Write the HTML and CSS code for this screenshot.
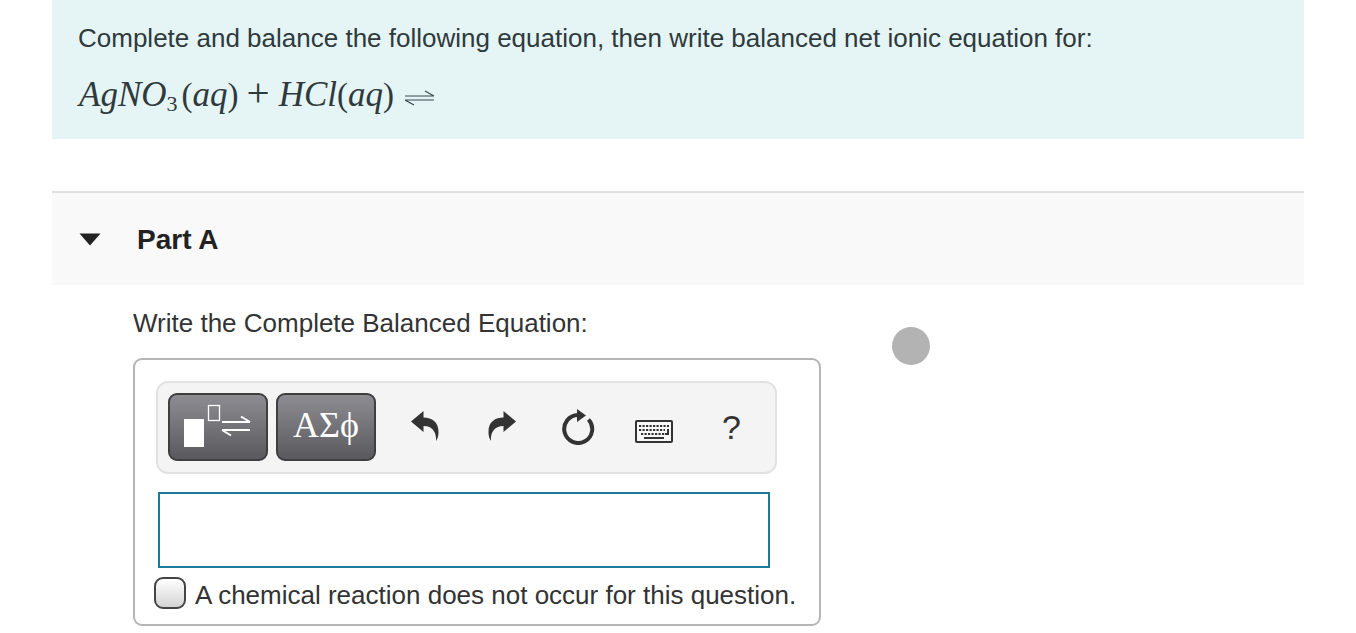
FILE: index.html
```html
<!DOCTYPE html>
<html lang="en">
<head>
<meta charset="utf-8">
<title>Part A</title>
<link rel="stylesheet" href="styles.css">
</head>
<body>
<main class="page">
  <section class="intro">
    <p class="intro-text">Complete and balance the following equation, then write balanced net ionic equation for:</p>
    <p class="equation"><i>AgNO</i><span class="sub">3</span><span class="paren">(</span><i>aq</i><span class="paren">)</span><span class="plus">+</span><i>HCl</i><span class="paren">(</span><i>aq</i><span class="paren">)</span><svg class="eq-arrows" viewBox="0 0 30 16" aria-hidden="true"><path d="M0 6H29M29 6L20 1M29 10H0M0 10L9 15" fill="none" stroke="#3b4a4c" stroke-width="1.2"/></svg></p>
  </section>

  <header class="part-header">
    <svg class="caret" viewBox="0 0 22 13" aria-hidden="true"><path d="M0.5 0.5H21.5L11 12.5Z" fill="#222"/></svg>
    <h2 class="part-title">Part A</h2>
  </header>

  <section class="part-body">
    <p class="prompt">Write the Complete Balanced Equation:</p>
    <div class="panel">
      <div class="toolbar">
        <button class="tool-btn" type="button" aria-label="Templates">
          <svg class="tmpl" viewBox="0 0 68 46" aria-hidden="true">
            <rect x="0" y="15" width="20" height="28" fill="#fff"/>
            <rect x="24.500" y="1.500" width="11" height="15" fill="none" stroke="#fff" stroke-width="1.300"/>
            <path d="M38 18H66M66 18L57 12.500M66 26H38M38 26L47 31.500" fill="none" stroke="#fff" stroke-width="2"/>
          </svg>
        </button>
        <button class="tool-btn symbols" type="button">ΑΣϕ</button>
        <div class="icons">
          <svg class="icon undo" viewBox="0 0 30 32" aria-hidden="true"><path d="M1 11.500L13.500 1V7.500C22 7.500 29 12 28.500 23C28.400 26 27.500 29 26 31C26.600 24 24 16 13.500 16V22Z" fill="#333"/></svg>
          <svg class="icon redo" viewBox="0 0 30 32" aria-hidden="true"><path d="M29 11.500L16.500 1V7.500C8 7.500 1 12 1.500 23C1.600 26 2.500 29 4 31C3.400 24 6 16 16.500 16V22Z" fill="#333"/></svg>
          <svg class="icon reload" viewBox="0 0 34 36" aria-hidden="true"><path d="M17 6A14 14 0 1 0 27.500 10.500" fill="none" stroke="#333" stroke-width="4"/><path d="M16 0L25 6.500L16 13Z" fill="#333"/></svg>
          <svg class="icon kbd" viewBox="0 0 38 23" aria-hidden="true">
            <rect x="1" y="1" width="36" height="21" rx="1" fill="#f8f8f8" stroke="#333" stroke-width="2"/>
            <path d="M4 6H34M4 10H30M6 14H30" fill="none" stroke="#333" stroke-width="2" stroke-dasharray="2.200 1.300"/>
            <path d="M33 9V14H30M9 18H29" fill="none" stroke="#333" stroke-width="2"/>
          </svg>
          <span class="help">?</span>
        </div>
      </div>
      <div class="answer"></div>
      <label class="no-reaction"><span class="checkbox"></span><span>A chemical reaction does not occur for this question.</span></label>
    </div>
    <span class="dot"></span>
  </section>
</main>
</body>
</html>
```

FILE: styles.css
```css
* { box-sizing: border-box; }
html, body { margin: 0; height: 633px; overflow: hidden; background: #fff; }
body { font-family: "Liberation Sans", Arial, sans-serif; color: #333; }
.page { margin: 0 52px; }
p { margin: 0; }

.intro { height: 139px; background: #e5f5f6; padding: 23px 26px 0; }
.intro-text { font-size: 26px; line-height: 30px; color: #2f3a3c; }
.equation { display: flex; align-items: baseline; margin-top: 19px; padding-left: 1px; font-family: "Liberation Serif", serif; font-size: 35px; line-height: 46px; color: #2f3a3c; }
.equation i { font-style: italic; }
.sub { font-size: 22px; position: relative; top: 5px; margin-right: 4px; }
.paren { font-size: 33px; }
.plus { margin: 0 9px 0 8px; font-size: 41px; line-height: 30px; }
.eq-arrows { width: 30px; height: 16px; margin: 18px 0 0 11px; align-self: flex-start; }

.part-header { display: flex; align-items: center; height: 94px; margin-top: 52px; padding-left: 27px; background: #f9f9f9; border-top: 2px solid #e0e0e0; }
.caret { width: 22px; height: 13px; }
.part-title { margin: 2px 0 0 36px; font-size: 28px; font-weight: 700; color: #222; }

.part-body { position: relative; padding: 22px 0 0 81px; }
.prompt { font-size: 26px; line-height: 32px; }
.panel { width: 688px; height: 268px; margin-top: 19px; padding: 21px 20px 0 21px; border: 2px solid #b5b5b5; border-radius: 9px; }
.toolbar { display: flex; align-items: center; gap: 8px; width: 621px; height: 93px; padding: 10px 10px 11px; background: #f4f4f4; border: 2px solid #e2e2e2; border-radius: 12px; }
.tool-btn { width: 100px; height: 68px; padding: 0; display: flex; align-items: center; justify-content: center; border: 2px solid #3f3f3f; border-radius: 9px; background: linear-gradient(#8c8c92, #5a5a5e); color: #fff; font-family: "Liberation Serif", serif; font-size: 36px; }
.symbols { padding-bottom: 5px; }
.tmpl { width: 68px; height: 46px; }
.icons { display: flex; align-items: center; flex: 1; padding-left: 26px; }
.icon { flex: none; }
.undo, .redo { width: 30px; height: 32px; margin-bottom: 2px; }
.redo { margin-left: 47px; }
.reload { width: 34px; height: 36px; margin-left: 44px; }
.kbd { width: 38px; height: 23px; margin: 9px 0 0 40px; }
.help { margin-left: 49px; font-size: 34px; line-height: 34px; color: #333; }
.answer { width: 612px; height: 76px; margin: 18px 0 0 2px; border: 2px solid #1b7a9a; background: #fff; }
.no-reaction { display: flex; align-items: center; gap: 9px; margin: 9px 0 0 -2px; font-size: 26px; line-height: 34px; }
.checkbox { width: 32px; height: 32px; margin-bottom: 4px; border: 2px solid #444; border-radius: 9px; background: linear-gradient(#fff, #d4d4d4); }
.dot { position: absolute; left: 840px; top: 42px; width: 38px; height: 38px; border-radius: 50%; background: #b3b3b3; }
```
